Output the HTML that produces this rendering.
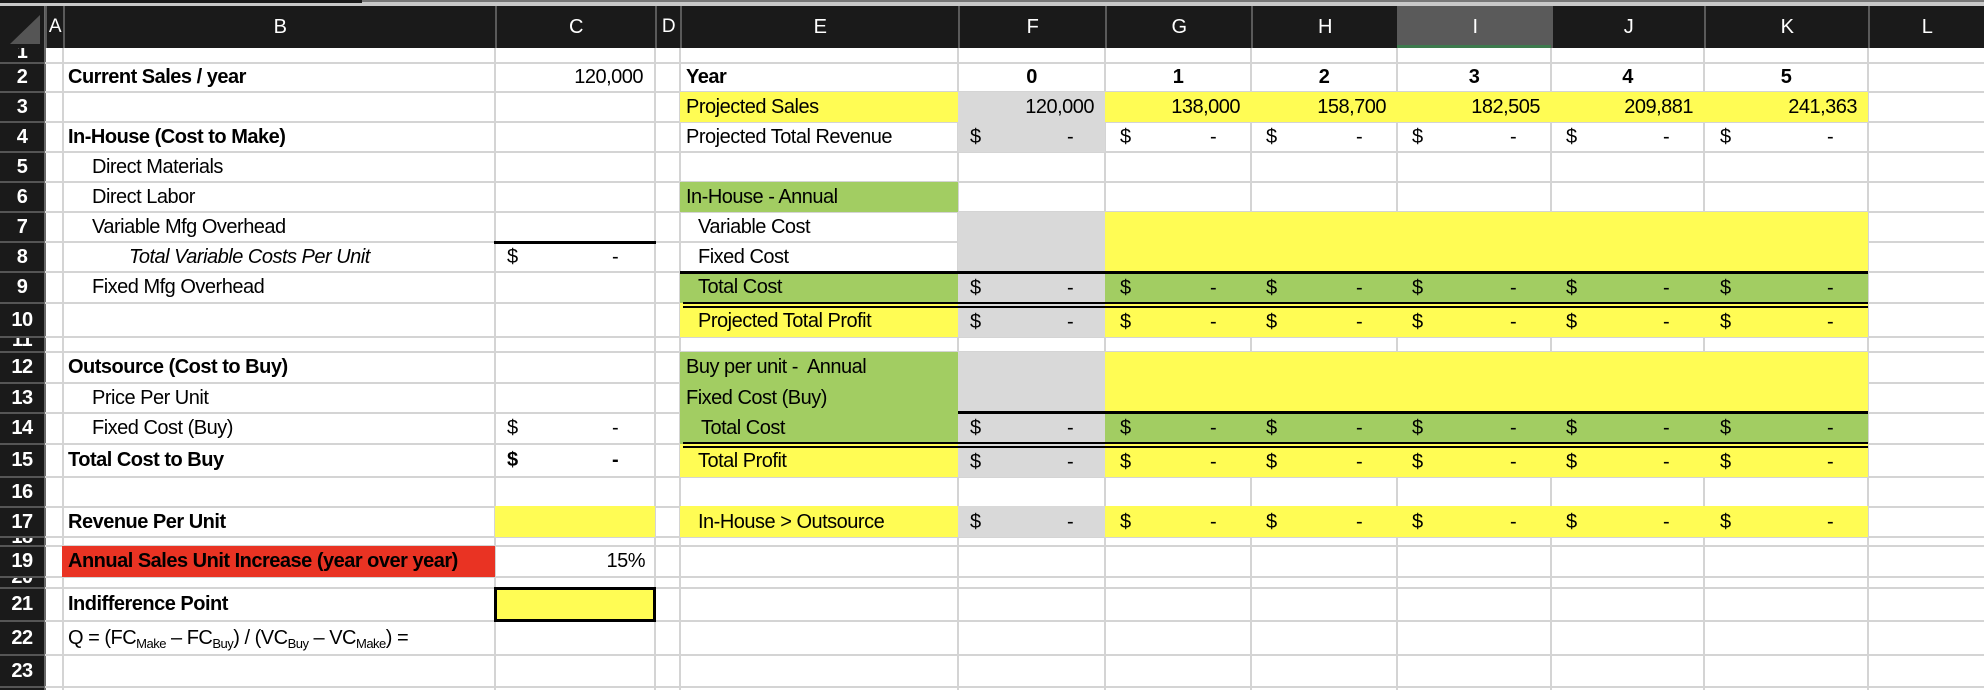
<!DOCTYPE html>
<html><head><meta charset="utf-8">
<style>
*{margin:0;padding:0;box-sizing:border-box}
body{width:1984px;height:690px;overflow:hidden;background:#fff;position:relative;font-family:"Liberation Sans",sans-serif;font-size:20px;color:#000;letter-spacing:-0.5px}
div{position:absolute}
.vl{top:48px;height:642px;width:2px;background:#d4d4d4}
.hl{left:45px;width:1939px;height:2px;background:#d4d4d4}
.ch{top:6px;height:42px;color:#fff;font-size:20px;text-align:center;line-height:42px;border-left:2px solid #5a5a5a}
.rn{left:0;width:44px;color:#fff;font-size:20px;text-align:center;overflow:hidden;font-weight:bold}
.y{background:#fffc54}.g{background:#a2cd62}.gr{background:#d9d9d9}
.t{white-space:nowrap}
.b{font-weight:bold}
.r{text-align:right}
.bk{background:#000;height:3px}
sub{font-size:13px;vertical-align:-4px}
</style></head><body>
<div style="left:0;top:0;width:1984px;height:6px;background:#c8c8c8"></div>
<div style="left:0;top:0;width:362px;height:3px;background:#1a1a1a"></div>
<div style="left:362px;top:0;width:1622px;height:2px;background:#777"></div>
<div style="left:0;top:6px;width:1984px;height:42px;background:#1a1a1a"></div>
<div style="left:0;top:48px;width:45px;height:642px;background:#1a1a1a"></div>
<div style="left:44px;top:6px;width:2px;height:684px;background:#6a6a6a"></div>
<svg style="position:absolute;left:10px;top:15px" width="32" height="30"><polygon points="30,0 30,29 0,29" fill="#555"/></svg>
<div class="ch" style="left:45px;width:18px;font-size:19px">A</div>
<div class="ch" style="left:63px;width:432px">B</div>
<div class="ch" style="left:495px;width:160px">C</div>
<div class="ch" style="left:655px;width:25px;font-size:19px">D</div>
<div class="ch" style="left:680px;width:278px">E</div>
<div class="ch" style="left:958px;width:147px">F</div>
<div class="ch" style="left:1105px;width:146px">G</div>
<div class="ch" style="left:1251px;width:146px">H</div>
<div class="ch" style="left:1397px;width:154px;background:#5a5a5a">I</div>
<div style="left:1397px;top:45px;width:154px;height:3px;background:#3d7a4d"></div>
<div class="ch" style="left:1551px;width:153px">J</div>
<div class="ch" style="left:1704px;width:164px">K</div>
<div class="ch" style="left:1868px;width:116px">L</div>
<div class="rn" style="top:48px;height:15px;line-height:8px">1</div>
<div class="rn" style="top:63px;height:29px;line-height:29px">2</div>
<div class="rn" style="top:92px;height:30px;line-height:30px">3</div>
<div class="rn" style="top:122px;height:30px;line-height:30px">4</div>
<div class="rn" style="top:152px;height:30px;line-height:30px">5</div>
<div class="rn" style="top:182px;height:30px;line-height:30px">6</div>
<div class="rn" style="top:212px;height:30px;line-height:30px">7</div>
<div class="rn" style="top:242px;height:30px;line-height:30px">8</div>
<div class="rn" style="top:272px;height:31px;line-height:31px">9</div>
<div class="rn" style="top:303px;height:34px;line-height:34px">10</div>
<div class="rn" style="top:337px;height:15px;line-height:6px">11</div>
<div class="rn" style="top:352px;height:31px;line-height:31px">12</div>
<div class="rn" style="top:383px;height:30px;line-height:30px">13</div>
<div class="rn" style="top:413px;height:31px;line-height:31px">14</div>
<div class="rn" style="top:444px;height:33px;line-height:33px">15</div>
<div class="rn" style="top:477px;height:30px;line-height:30px">16</div>
<div class="rn" style="top:507px;height:30px;line-height:30px">17</div>
<div class="rn" style="top:537px;height:9px;line-height:0px">18</div>
<div class="rn" style="top:546px;height:31px;line-height:31px">19</div>
<div class="rn" style="top:577px;height:11px;line-height:0px">20</div>
<div class="rn" style="top:588px;height:33px;line-height:33px">21</div>
<div class="rn" style="top:621px;height:34px;line-height:34px">22</div>
<div class="rn" style="top:655px;height:32px;line-height:32px">23</div>
<div class="vl" style="left:62px"></div><div class="vl" style="left:494px"></div><div class="vl" style="left:654px"></div><div class="vl" style="left:679px"></div><div class="vl" style="left:957px"></div><div class="vl" style="left:1104px"></div><div class="vl" style="left:1250px"></div><div class="vl" style="left:1396px"></div><div class="vl" style="left:1550px"></div><div class="vl" style="left:1703px"></div><div class="vl" style="left:1867px"></div>
<div class="hl" style="top:62px"></div><div class="hl" style="top:91px"></div><div class="hl" style="top:121px"></div><div class="hl" style="top:151px"></div><div class="hl" style="top:181px"></div><div class="hl" style="top:211px"></div><div class="hl" style="top:241px"></div><div class="hl" style="top:271px"></div><div class="hl" style="top:302px"></div><div class="hl" style="top:336px"></div><div class="hl" style="top:351px"></div><div class="hl" style="top:382px"></div><div class="hl" style="top:412px"></div><div class="hl" style="top:443px"></div><div class="hl" style="top:476px"></div><div class="hl" style="top:506px"></div><div class="hl" style="top:536px"></div><div class="hl" style="top:545px"></div><div class="hl" style="top:576px"></div><div class="hl" style="top:587px"></div><div class="hl" style="top:620px"></div><div class="hl" style="top:654px"></div><div class="hl" style="top:686px"></div>
<div style="left:0;top:62px;width:44px;height:2px;background:#555"></div><div style="left:0;top:91px;width:44px;height:2px;background:#555"></div><div style="left:0;top:121px;width:44px;height:2px;background:#555"></div><div style="left:0;top:151px;width:44px;height:2px;background:#555"></div><div style="left:0;top:181px;width:44px;height:2px;background:#555"></div><div style="left:0;top:211px;width:44px;height:2px;background:#555"></div><div style="left:0;top:241px;width:44px;height:2px;background:#555"></div><div style="left:0;top:271px;width:44px;height:2px;background:#555"></div><div style="left:0;top:302px;width:44px;height:2px;background:#555"></div><div style="left:0;top:336px;width:44px;height:2px;background:#555"></div><div style="left:0;top:351px;width:44px;height:2px;background:#555"></div><div style="left:0;top:382px;width:44px;height:2px;background:#555"></div><div style="left:0;top:412px;width:44px;height:2px;background:#555"></div><div style="left:0;top:443px;width:44px;height:2px;background:#555"></div><div style="left:0;top:476px;width:44px;height:2px;background:#555"></div><div style="left:0;top:506px;width:44px;height:2px;background:#555"></div><div style="left:0;top:536px;width:44px;height:2px;background:#555"></div><div style="left:0;top:545px;width:44px;height:2px;background:#555"></div><div style="left:0;top:576px;width:44px;height:2px;background:#555"></div><div style="left:0;top:587px;width:44px;height:2px;background:#555"></div><div style="left:0;top:620px;width:44px;height:2px;background:#555"></div><div style="left:0;top:654px;width:44px;height:2px;background:#555"></div><div style="left:0;top:686px;width:44px;height:2px;background:#555"></div>

<div class="y" style="left:680px;top:92px;width:278px;height:30px"></div>
<div class="gr" style="left:958px;top:92px;width:147px;height:60px"></div>
<div class="y" style="left:1105px;top:92px;width:763px;height:30px"></div>
<div class="g" style="left:680px;top:182px;width:278px;height:30px"></div>
<div class="gr" style="left:958px;top:212px;width:147px;height:125px"></div>
<div class="y" style="left:1105px;top:212px;width:763px;height:60px"></div>
<div class="g" style="left:680px;top:272px;width:278px;height:31px"></div>
<div class="g" style="left:1105px;top:272px;width:763px;height:31px"></div>
<div class="y" style="left:680px;top:303px;width:278px;height:34px"></div>
<div class="y" style="left:1105px;top:303px;width:763px;height:34px"></div>
<div class="bk" style="left:680px;top:271px;width:1188px;height:3px"></div>
<div class="bk" style="left:683px;top:302px;width:1185px;height:2px"></div>
<div class="bk" style="left:683px;top:306px;width:1185px;height:2px"></div>
<div class="g" style="left:680px;top:352px;width:278px;height:92px"></div>
<div class="gr" style="left:958px;top:352px;width:147px;height:125px"></div>
<div class="y" style="left:1105px;top:352px;width:763px;height:61px"></div>
<div class="g" style="left:1105px;top:413px;width:763px;height:31px"></div>
<div class="y" style="left:680px;top:444px;width:278px;height:33px"></div>
<div class="y" style="left:1105px;top:444px;width:763px;height:33px"></div>
<div class="bk" style="left:958px;top:411px;width:910px;height:3px"></div>
<div class="bk" style="left:683px;top:442px;width:1185px;height:2px"></div>
<div class="bk" style="left:683px;top:446px;width:1185px;height:2px"></div>
<div class="y" style="left:495px;top:506px;width:160px;height:31px"></div>
<div class="y" style="left:680px;top:506px;width:278px;height:31px"></div>
<div class="gr" style="left:958px;top:506px;width:147px;height:31px"></div>
<div class="y" style="left:1105px;top:506px;width:763px;height:31px"></div>
<div style="left:62px;top:546px;width:433px;height:31px;background:#e93323"></div>
<div class="y" style="left:494px;top:587px;width:162px;height:35px;border:3px solid #000"></div>
<div class="bk" style="left:494px;top:241px;width:162px;height:3px"></div>

<div class="t b" style="left:68px;top:63px;line-height:29px">Current Sales / year</div>
<div class="t b" style="left:68px;top:122px;line-height:30px">In-House (Cost to Make)</div>
<div class="t" style="left:92px;top:152px;line-height:30px">Direct Materials</div>
<div class="t" style="left:92px;top:182px;line-height:30px">Direct Labor</div>
<div class="t" style="left:92px;top:212px;line-height:30px">Variable Mfg Overhead</div>
<div class="t" style="left:129px;top:242px;line-height:30px;font-style:italic">Total Variable Costs Per Unit</div>
<div class="t" style="left:92px;top:272px;line-height:31px">Fixed Mfg Overhead</div>
<div class="t b" style="left:68px;top:352px;line-height:31px">Outsource (Cost to Buy)</div>
<div class="t" style="left:92px;top:383px;line-height:30px">Price Per Unit</div>
<div class="t" style="left:92px;top:413px;line-height:31px">Fixed Cost (Buy)</div>
<div class="t b" style="left:68px;top:444px;line-height:33px">Total Cost to Buy</div>
<div class="t b" style="left:68px;top:507px;line-height:30px">Revenue Per Unit</div>
<div class="t b" style="left:68px;top:546px;line-height:31px">Annual Sales Unit Increase (year over year)</div>
<div class="t b" style="left:68px;top:588px;line-height:33px">Indifference Point</div>
<div class="t" style="left:68px;top:621px;line-height:34px">Q = (FC<sub>Make</sub> – FC<sub>Buy</sub>) / (VC<sub>Buy</sub> – VC<sub>Make</sub>) =</div>

<div class="t r" style="left:495px;width:148px;top:63px;line-height:29px">120,000</div>
<div class="t" style="left:507px;top:242px;line-height:30px">$</div><div class="t" style="left:612px;top:242px;line-height:30px">-</div>
<div class="t" style="left:507px;top:413px;line-height:31px">$</div><div class="t" style="left:612px;top:413px;line-height:31px">-</div>
<div class="t b" style="left:507px;top:444px;line-height:33px">$</div><div class="t b" style="left:612px;top:444px;line-height:33px">-</div>
<div class="t r" style="left:495px;width:150px;top:546px;line-height:31px">15%</div>

<div class="t b" style="left:686px;top:63px;line-height:29px">Year</div>
<div class="t" style="left:686px;top:92px;line-height:30px">Projected Sales</div>
<div class="t" style="left:686px;top:122px;line-height:30px">Projected Total Revenue</div>
<div class="t" style="left:686px;top:182px;line-height:30px">In-House - Annual</div>
<div class="t" style="left:698px;top:212px;line-height:30px">Variable Cost</div>
<div class="t" style="left:698px;top:242px;line-height:30px">Fixed Cost</div>
<div class="t" style="left:698px;top:272px;line-height:31px">Total Cost</div>
<div class="t" style="left:698px;top:306px;line-height:31px">Projected Total Profit</div>
<div class="t" style="left:686px;top:352px;line-height:31px">Buy per unit -&nbsp; Annual</div>
<div class="t" style="left:686px;top:383px;line-height:30px">Fixed Cost (Buy)</div>
<div class="t" style="left:701px;top:413px;line-height:31px">Total Cost</div>
<div class="t" style="left:698px;top:446px;line-height:31px">Total Profit</div>
<div class="t" style="left:698px;top:507px;line-height:30px">In-House &gt; Outsource</div>

<div class="t b" style="left:958px;width:147px;text-align:center;top:63px;line-height:29px">0</div>
<div class="t b" style="left:1105px;width:146px;text-align:center;top:63px;line-height:29px">1</div>
<div class="t b" style="left:1251px;width:146px;text-align:center;top:63px;line-height:29px">2</div>
<div class="t b" style="left:1397px;width:154px;text-align:center;top:63px;line-height:29px">3</div>
<div class="t b" style="left:1551px;width:153px;text-align:center;top:63px;line-height:29px">4</div>
<div class="t b" style="left:1704px;width:164px;text-align:center;top:63px;line-height:29px">5</div>
<div class="t r" style="left:958px;width:136px;top:92px;line-height:30px">120,000</div>
<div class="t r" style="left:1105px;width:135px;top:92px;line-height:30px">138,000</div>
<div class="t r" style="left:1251px;width:135px;top:92px;line-height:30px">158,700</div>
<div class="t r" style="left:1397px;width:143px;top:92px;line-height:30px">182,505</div>
<div class="t r" style="left:1551px;width:142px;top:92px;line-height:30px">209,881</div>
<div class="t r" style="left:1704px;width:153px;top:92px;line-height:30px">241,363</div>

<div class="t" style="left:970px;top:122px;line-height:30px">$</div><div class="t" style="left:1067px;top:122px;line-height:30px">-</div>
<div class="t" style="left:1120px;top:122px;line-height:30px">$</div><div class="t" style="left:1210px;top:122px;line-height:30px">-</div>
<div class="t" style="left:1266px;top:122px;line-height:30px">$</div><div class="t" style="left:1356px;top:122px;line-height:30px">-</div>
<div class="t" style="left:1412px;top:122px;line-height:30px">$</div><div class="t" style="left:1510px;top:122px;line-height:30px">-</div>
<div class="t" style="left:1566px;top:122px;line-height:30px">$</div><div class="t" style="left:1663px;top:122px;line-height:30px">-</div>
<div class="t" style="left:1720px;top:122px;line-height:30px">$</div><div class="t" style="left:1827px;top:122px;line-height:30px">-</div>

<div class="t" style="left:970px;top:273px;line-height:30px">$</div><div class="t" style="left:1067px;top:273px;line-height:30px">-</div>
<div class="t" style="left:1120px;top:273px;line-height:30px">$</div><div class="t" style="left:1210px;top:273px;line-height:30px">-</div>
<div class="t" style="left:1266px;top:273px;line-height:30px">$</div><div class="t" style="left:1356px;top:273px;line-height:30px">-</div>
<div class="t" style="left:1412px;top:273px;line-height:30px">$</div><div class="t" style="left:1510px;top:273px;line-height:30px">-</div>
<div class="t" style="left:1566px;top:273px;line-height:30px">$</div><div class="t" style="left:1663px;top:273px;line-height:30px">-</div>
<div class="t" style="left:1720px;top:273px;line-height:30px">$</div><div class="t" style="left:1827px;top:273px;line-height:30px">-</div>

<div class="t" style="left:970px;top:307px;line-height:30px">$</div><div class="t" style="left:1067px;top:307px;line-height:30px">-</div>
<div class="t" style="left:1120px;top:307px;line-height:30px">$</div><div class="t" style="left:1210px;top:307px;line-height:30px">-</div>
<div class="t" style="left:1266px;top:307px;line-height:30px">$</div><div class="t" style="left:1356px;top:307px;line-height:30px">-</div>
<div class="t" style="left:1412px;top:307px;line-height:30px">$</div><div class="t" style="left:1510px;top:307px;line-height:30px">-</div>
<div class="t" style="left:1566px;top:307px;line-height:30px">$</div><div class="t" style="left:1663px;top:307px;line-height:30px">-</div>
<div class="t" style="left:1720px;top:307px;line-height:30px">$</div><div class="t" style="left:1827px;top:307px;line-height:30px">-</div>

<div class="t" style="left:970px;top:413px;line-height:30px">$</div><div class="t" style="left:1067px;top:413px;line-height:30px">-</div>
<div class="t" style="left:1120px;top:413px;line-height:30px">$</div><div class="t" style="left:1210px;top:413px;line-height:30px">-</div>
<div class="t" style="left:1266px;top:413px;line-height:30px">$</div><div class="t" style="left:1356px;top:413px;line-height:30px">-</div>
<div class="t" style="left:1412px;top:413px;line-height:30px">$</div><div class="t" style="left:1510px;top:413px;line-height:30px">-</div>
<div class="t" style="left:1566px;top:413px;line-height:30px">$</div><div class="t" style="left:1663px;top:413px;line-height:30px">-</div>
<div class="t" style="left:1720px;top:413px;line-height:30px">$</div><div class="t" style="left:1827px;top:413px;line-height:30px">-</div>

<div class="t" style="left:970px;top:447px;line-height:30px">$</div><div class="t" style="left:1067px;top:447px;line-height:30px">-</div>
<div class="t" style="left:1120px;top:447px;line-height:30px">$</div><div class="t" style="left:1210px;top:447px;line-height:30px">-</div>
<div class="t" style="left:1266px;top:447px;line-height:30px">$</div><div class="t" style="left:1356px;top:447px;line-height:30px">-</div>
<div class="t" style="left:1412px;top:447px;line-height:30px">$</div><div class="t" style="left:1510px;top:447px;line-height:30px">-</div>
<div class="t" style="left:1566px;top:447px;line-height:30px">$</div><div class="t" style="left:1663px;top:447px;line-height:30px">-</div>
<div class="t" style="left:1720px;top:447px;line-height:30px">$</div><div class="t" style="left:1827px;top:447px;line-height:30px">-</div>

<div class="t" style="left:970px;top:507px;line-height:30px">$</div><div class="t" style="left:1067px;top:507px;line-height:30px">-</div>
<div class="t" style="left:1120px;top:507px;line-height:30px">$</div><div class="t" style="left:1210px;top:507px;line-height:30px">-</div>
<div class="t" style="left:1266px;top:507px;line-height:30px">$</div><div class="t" style="left:1356px;top:507px;line-height:30px">-</div>
<div class="t" style="left:1412px;top:507px;line-height:30px">$</div><div class="t" style="left:1510px;top:507px;line-height:30px">-</div>
<div class="t" style="left:1566px;top:507px;line-height:30px">$</div><div class="t" style="left:1663px;top:507px;line-height:30px">-</div>
<div class="t" style="left:1720px;top:507px;line-height:30px">$</div><div class="t" style="left:1827px;top:507px;line-height:30px">-</div>
</body></html>
